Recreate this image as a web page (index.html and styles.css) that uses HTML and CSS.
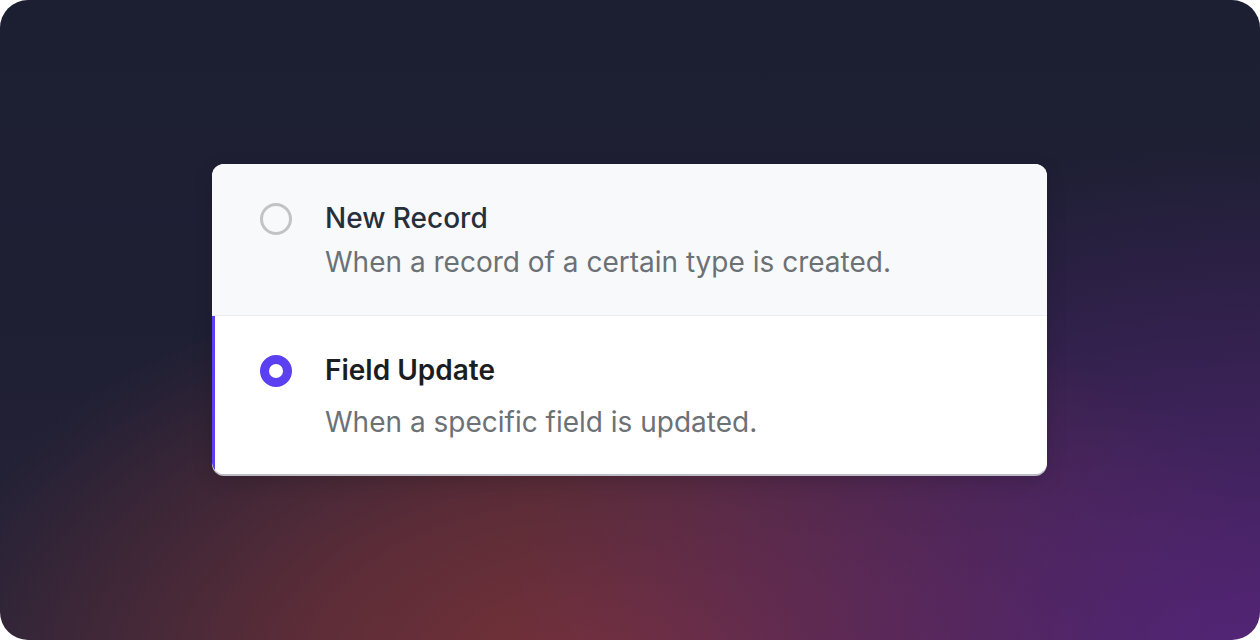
FILE: index.html
```html
<!DOCTYPE html>
<html>
<head>
<meta charset="utf-8">
<link rel="stylesheet" href="styles.css">
</head>
<body>
<div class="frame">
  <div class="card">
    <div class="option">
      <span class="radio"></span>
      <div class="text">
        <div class="title">New Record</div>
        <div class="desc">When a record of a certain type is created.</div>
      </div>
    </div>
    <div class="option selected">
      <span class="radio"></span>
      <div class="text">
        <div class="title">Field Update</div>
        <div class="desc">When a specific field is updated.</div>
      </div>
    </div>
  </div>
</div>
</body>
</html>
```
FILE: styles.css
```css
html, body { margin: 0; padding: 0; background: #fff; }
body { font-family: Inter, "Noto Sans", sans-serif; }
.frame {
  width: 1260px;
  height: 640px;
  border-radius: 28px;
  overflow: hidden;
  box-sizing: border-box;
  padding: 164px 0 0 212px;
  display: flex;
  justify-content: flex-start;
  align-items: flex-start;
  background:
    radial-gradient(ellipse 760px 520px at 1260px 660px, rgba(84,36,120,1), rgba(84,36,120,0.6) 40%, rgba(84,36,120,0) 100%),
    radial-gradient(ellipse 720px 420px at 620px 680px, rgba(122,50,56,1), rgba(122,50,56,0.65) 45%, rgba(122,50,56,0) 100%),
    linear-gradient(180deg, #1c1f32 0%, #1f1f34 50%, #252338 100%);
}
.card {
  width: 835px;
  background: #fff;
  border-radius: 12px;
  overflow: hidden;
  box-shadow: 0 2px 0 rgba(196,196,204,0.95), 0 6px 20px rgba(0,0,0,0.15);
}
.option {
  display: flex;
  align-items: flex-start;
  padding: 36px 40px 35px 48px;
  background: #f8f9fb;
  border-bottom: 1px solid #eceef1;
}
.option.selected {
  background: #fff;
  border-bottom: none;
  border-left: 3px solid #5b3ff0;
  padding: 36px 40px 34px 45px;
}
.radio {
  flex: none;
  width: 32px;
  height: 32px;
  box-sizing: border-box;
  border-radius: 50%;
  border: 3px solid #c2c3c4;
  margin-top: 3px;
  margin-right: 33px;
}
.selected .radio {
  border: 9px solid #5a40f0;
  background: #fff;
}
.title {
  font-size: 28px;
  line-height: 36px;
  color: #27303a;
  font-weight: 450;
}
.selected .title { font-weight: 600; color: #1a1d21; }
.desc {
  font-size: 28px;
  line-height: 36px;
  color: #6c7176;
  margin-top: 8px;
}
.selected .desc { margin-top: 16px; }
```
